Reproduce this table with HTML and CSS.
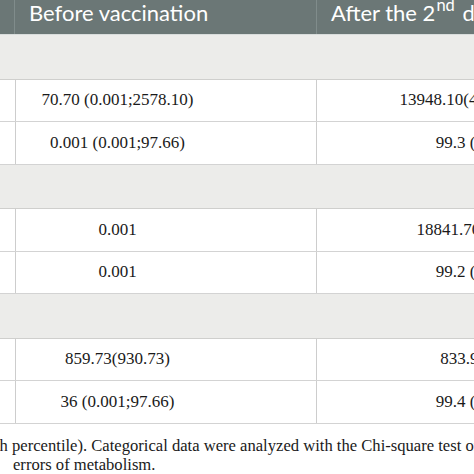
FILE: index.html
```html
<!DOCTYPE html>
<html>
<head>
<meta charset="utf-8">
<link rel="stylesheet" href="styles.css">
</head>
<body>
<div class="page">
  <div class="table">
    <div class="tr head">
      <div class="cell label"></div>
      <div class="cell before">Before vaccination</div>
      <div class="cell after">After the 2<sup>nd</sup> dose</div>
    </div>
    <div class="tr section"></div>
    <div class="tr row"><div class="cell label"></div><div class="cell before">70.70 (0.001;2578.10)</div><div class="cell after">13948.10(4233.10;48751.20)</div></div>
    <div class="tr row"><div class="cell label"></div><div class="cell before">0.001 (0.001;97.66)</div><div class="cell after">99.3 (0.001;97.66)</div></div>
    <div class="tr section"></div>
    <div class="tr row"><div class="cell label"></div><div class="cell before">0.001</div><div class="cell after">18841.70(0.001;2578.1)</div></div>
    <div class="tr row"><div class="cell label"></div><div class="cell before">0.001</div><div class="cell after">99.2 (0.001;97.66)</div></div>
    <div class="tr section"></div>
    <div class="tr row"><div class="cell label"></div><div class="cell before">859.73(930.73)</div><div class="cell after">833.93 (1012.47)</div></div>
    <div class="tr row"><div class="cell label"></div><div class="cell before">36 (0.001;97.66)</div><div class="cell after">99.4 (0.001;97.66)</div></div>
  </div>
  <div class="note">
    <p class="l1">th percentile). Categorical data were analyzed with the Chi-square test or Fisher's exact test.</p>
    <p class="l2">errors of metabolism.</p>
  </div>
</div>
</body>
</html>
```

FILE: styles.css
```css
html, body {
  margin: 0;
  padding: 0;
  background: #ffffff;
  overflow: hidden;
}
.page {
  width: 474px;
  height: 474px;
  overflow: hidden;
}
.table {
  width: 681px;
  display: flex;
  flex-direction: column;
}
.tr {
  display: flex;
  box-sizing: border-box;
}
.cell {
  box-sizing: border-box;
  flex: none;
  white-space: nowrap;
}
.label { width: 16px; }
.before { width: 301px; }
.after { width: 364px; }

.head {
  height: 35px;
  background: #6b7776;
  border-bottom: 1px solid #d9dddc;
}
.head .cell {
  color: #ffffff;
  font-family: Lato, "Open Sans", sans-serif;
  font-size: 22px;
  line-height: 24px;
  padding-top: 1px;
  border-right: 1px solid #808c8b;
}
.head .label { width: 15px; }
.head .before { width: 302px; padding-left: 14px; }
.head .after { padding-left: 14px; border-right: none; }
.head sup {
  font-size: 16.5px;
  line-height: 0;
  vertical-align: 10px;
  margin-left: 1px;
  margin-right: 2px;
}

.section {
  height: 44.5px;
  background: #ececea;
  border-bottom: 1px solid #cfcfcd;
}

.row {
  height: 42.5px;
  border-bottom: 1px solid #d3d3d3;
  font-family: "Liberation Serif", serif;
  font-size: 17px;
  color: #1a1a1a;
}
.row .cell {
  display: flex;
  align-items: center;
  justify-content: center;
  border-right: 1px solid #cdcdcd;
}
.row .before {
  padding-right: 97px;
}
.row .after {
  border-right: none;
}

.note {
  font-family: "Liberation Serif", serif;
  font-size: 16.6px;
  line-height: 19.5px;
  color: #1a1a1a;
  white-space: nowrap;
  padding-top: 12px;
}
.note p {
  margin: 0;
}
.note .l1 {
  margin-left: -5px;
}
.note .l2 {
  padding-left: 13px;
}
```
